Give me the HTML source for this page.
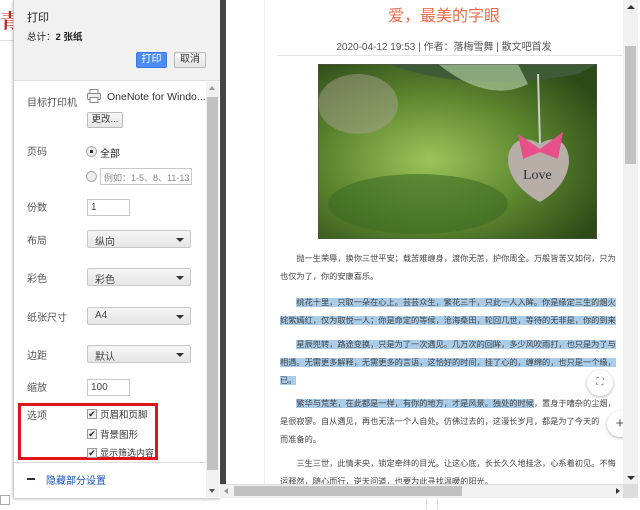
<!DOCTYPE html>
<html><head><meta charset="utf-8"><style>
*{box-sizing:border-box;margin:0;padding:0}
body{width:640px;height:510px;overflow:hidden;background:#fff;position:relative;font-family:"Liberation Sans","Noto Sans CJK SC",sans-serif;font-size:11px;color:#333}
.a{position:absolute}
.lbl{position:absolute;left:27px;font-size:10px;color:#555}
.sel{position:absolute;left:87px;width:104px;height:18px;border:1px solid #c8c8c8;border-radius:2px;background:linear-gradient(#f6f6f6,#e6e6e6);font-size:10px;color:#444;padding:2px 0 0 7px}
.sel:after{content:"";position:absolute;right:6px;top:7px;border:4px solid transparent;border-top:4px solid #333;border-bottom:0}
.inp{position:absolute;left:87px;height:17px;border:1px solid #c8c8c8;background:#fff;font-size:10px;padding:2px 0 0 3px;color:#444;white-space:nowrap;overflow:hidden}
.cb{position:absolute;left:87px;width:10px;height:10px;border:1px solid #999;background:#eee;font-size:9px;line-height:8px;text-align:center;color:#222}
.ct{position:absolute;left:100px;font-size:9.5px;color:#333}
p.t{position:absolute;left:280px;width:343px;font-size:8.2px;line-height:18px;color:#444;white-space:nowrap;overflow:hidden}
.h{background:#a9cce9}
</style></head><body>
<div class="a" style="left:0;top:5px;color:#c3261c;font-size:20px;font-weight:bold;font-family:'Noto Serif CJK SC',serif">青</div>
<div class="a" style="left:0;top:40px;width:13px;height:1px;background:#ddd"></div>
<div class="a" style="left:0;top:495px;width:10px;height:10px;border:1px solid #aaa"></div>
<div class="a" style="left:13px;top:0;width:207px;height:498px;background:#fff;border-left:1px solid #ccc;box-shadow:0 1px 3px rgba(0,0,0,.3)"></div>
<div class="a" style="left:14px;top:0;width:206px;height:81px;background:#f1f1f1;border-bottom:1px solid #ddd"></div>
<div class="a" style="left:27px;top:9px;font-size:11px;color:#222">打印</div>
<div class="a" style="left:27px;top:29px;font-size:9.5px;color:#222">总计：<b>2 张纸</b></div>
<div class="a" style="left:136px;top:52px;width:31px;height:16px;background:#4b8cf5;border:1px solid #3a78e0;border-radius:2px;color:#fff;font-size:10px;text-align:center;line-height:14px">打印</div>
<div class="a" style="left:174px;top:52px;width:32px;height:16px;background:linear-gradient(#f7f7f7,#e5e5e5);border:1px solid #bbb;border-radius:2px;color:#333;font-size:10px;text-align:center;line-height:14px">取消</div>
<div class="a" style="left:206px;top:82px;width:13px;height:415px;background:#f1f1f1"></div>
<div class="a" style="left:207px;top:97px;width:11px;height:373px;background:#c1c1c1"></div>
<div class="a" style="left:209px;top:86px;border:3px solid transparent;border-bottom:4px solid #999;border-top:0"></div>
<div class="a" style="left:209px;top:489px;border:3px solid transparent;border-top:4px solid #555;border-bottom:0"></div>

<div class="lbl" style="top:94px">目标打印机</div>
<svg class="a" style="left:86px;top:88px" width="16" height="16" viewBox="0 0 16 16"><rect x="4" y="1.5" width="8" height="4" fill="#fff" stroke="#888"/><rect x="1.5" y="5.5" width="13" height="6" rx="1" fill="#eee" stroke="#888"/><rect x="4" y="9.5" width="8" height="5" fill="#fff" stroke="#888"/></svg>
<div class="a" style="left:107px;top:91px;font-size:10.5px;color:#333">OneNote for Windo...</div>
<div class="a" style="left:87px;top:112px;width:36px;height:16px;border:1px solid #bbb;border-radius:2px;background:linear-gradient(#f7f7f7,#e5e5e5);font-size:9.5px;text-align:center;line-height:14px">更改...</div>

<div class="lbl" style="top:143px">页码</div>
<div class="a" style="left:86px;top:146px;width:11px;height:11px;border:1px solid #aaa;border-radius:50%;background:#eee"><div style="margin:3px;width:3px;height:3px;background:#333"></div></div>
<div class="a" style="left:100px;top:145px;font-size:10px;color:#222">全部</div>
<div class="a" style="left:86px;top:171px;width:11px;height:11px;border:1px solid #aaa;border-radius:50%;background:#eee"></div>
<div class="inp" style="left:100px;top:168px;width:92px;color:#888;font-size:9px">例如：1-5、8、11-13</div>

<div class="lbl" style="top:199px">份数</div>
<div class="inp" style="top:199px;width:43px">1</div>
<div class="lbl" style="top:232px">布局</div>
<div class="sel" style="top:230px">纵向</div>
<div class="lbl" style="top:270px">彩色</div>
<div class="sel" style="top:268px">彩色</div>
<div class="lbl" style="top:309px">纸张尺寸</div>
<div class="sel" style="top:307px">A4</div>
<div class="lbl" style="top:347px">边距</div>
<div class="sel" style="top:345px">默认</div>
<div class="lbl" style="top:379px">缩放</div>
<div class="inp" style="top:379px;width:43px">100</div>

<div class="a" style="left:18px;top:403px;width:140px;height:57px;border:3px solid #e0141e"></div>
<div class="lbl" style="top:407px">选项</div>
<div class="cb" style="top:409px">✔</div><div class="ct" style="top:407px">页眉和页脚</div>
<div class="cb" style="top:429px">✔</div><div class="ct" style="top:427px">背景图形</div>
<div class="cb" style="top:448px">✔</div><div class="ct" style="top:446px;font-size:9px">显示筛选内容</div>
<div class="a" style="left:14px;top:462px;width:192px;height:1px;background:#ddd"></div>
<div class="a" style="left:27px;top:478px;width:8px;height:2px;background:#333"></div>
<div class="a" style="left:46px;top:472px;font-size:10px;color:#1a55c0">隐藏部分设置</div>

<div class="a" style="left:220px;top:0;width:6px;height:498px;background:#444"></div>
<div class="a" style="left:226px;top:0;width:397px;height:484px;background:#fff"></div>
<div class="a" style="left:264px;top:0;width:1px;height:484px;background:#eee"></div>
<div class="a" style="left:265px;top:2px;width:358px;text-align:center;font-size:16px;color:#f06b4b">爱，最美的字眼</div>
<div class="a" style="left:265px;top:38px;width:358px;text-align:center;font-size:10px;color:#555">2020-04-12 19:53 | 作者：落梅雪舞 | 散文吧首发</div>
<div class="a" style="left:277px;top:55px;width:346px;height:1px;background:#e4e4e4"></div>
<svg class="a" style="left:318px;top:64px" width="279" height="175" viewBox="0 0 279 175">
<defs><radialGradient id="g" cx="40%" cy="55%" r="70%"><stop offset="0" stop-color="#9cc45a"/><stop offset=".5" stop-color="#5f8a30"/><stop offset="1" stop-color="#2c4a18"/></radialGradient></defs>
<rect width="279" height="175" fill="url(#g)"/>
<ellipse cx="40" cy="40" rx="40" ry="30" fill="#a7a08f" opacity=".5"/>
<ellipse cx="100" cy="140" rx="90" ry="30" fill="#3d6a24" opacity=".6"/>
<path d="M70 0 Q150 30 260 10 L279 0Z" fill="#3e5b38"/>
<path d="M120 0 Q170 40 210 20 L200 0Z" fill="#a8c89a" opacity=".7"/>
<line x1="220" y1="10" x2="222" y2="80" stroke="#ccc" stroke-width="2"/>
<path d="M222 80 C190 60 170 110 222 138 C270 110 250 60 222 80Z" fill="#b8aea8"/>
<path d="M200 70 L222 85 L245 68 L240 95 L222 88 L205 95Z" fill="#e8508a"/>
<text x="205" y="115" font-size="14" font-family="Liberation Serif" fill="#333">Love</text>
<rect x=".5" y=".5" width="278" height="174" fill="none" stroke="#555" stroke-dasharray="1 1"/>
</svg>
<p class="t" style="top:250px">　　抛一生荣辱，换你三世平安；载苦难缠身，渡你无恙，护你周全。万般皆苦又如何，只为<br>也仅为了，你的安康喜乐。</p>
<p class="t" style="top:294px">　　<span class="h">桃花十里，只取一朵在心上。芸芸众生，繁花三千，只此一人入眸。你是缘定三生的烟火</span><br><span class="h">姹紫嫣红，仅为取悦一人；你是命定的等候，沧海桑田，轮回几世，等待的无非是，你的到来</span></p>
<p class="t" style="top:336px">　　<span class="h">星辰兜转，路途变换，只是为了一次遇见。几万次的回眸，多少风吹雨打，也只是为了与</span><br><span class="h">相遇。无需更多解释，无需更多的言语，这恰好的时间，挂了心的，缠绵的，也只是一个缘，</span><br><span class="h">已。</span></p>
<p class="t" style="top:395px">　　<span class="h">繁华与荒芜，在此都是一样，有你的地方，才是风景。独处的时候</span>，置身于嘈杂的尘烟，<br>是很寂寥。自从遇见，再也无法一个人自处。仿佛过去的，这漫长岁月，都是为了今天的<br>而准备的。</p>
<p class="t" style="top:455px">　　三生三世，此情未央，锁定牵绊的目光。让这心底，长长久久地挂念，心系着初见。不悔<br>运释然，随心而行，逆天问道，也要为此寻找温暖的阳光。</p>
<div class="a" style="left:587px;top:370px;width:26px;height:26px;border-radius:50%;background:#fff;box-shadow:0 1px 3px rgba(0,0,0,.3);text-align:center;line-height:25px;font-size:10px;color:#666">⛶</div>
<div class="a" style="left:607px;top:411px;width:26px;height:26px;border-radius:50%;background:#fff;box-shadow:0 1px 3px rgba(0,0,0,.3);text-align:center;line-height:25px;font-size:15px;color:#555">+</div>
<div class="a" style="left:623px;top:0;width:15px;height:484px;background:#f1f1f1"></div>
<div class="a" style="left:625px;top:46px;width:11px;height:118px;background:#c1c1c1"></div>
<div class="a" style="left:627px;top:5px;border:4px solid transparent;border-bottom:4px solid #333;border-top:0"></div>
<div class="a" style="left:627px;top:476px;border:4px solid transparent;border-top:4px solid #333;border-bottom:0"></div>
<div class="a" style="left:220px;top:484px;width:418px;height:14px;background:#f1f1f1;border-top:1px solid #ddd"></div>
<div class="a" style="left:234px;top:486px;width:228px;height:10px;background:#c1c1c1"></div>
<div class="a" style="left:224px;top:488px;border:3px solid transparent;border-right:4px solid #999;border-left:0"></div>
<div class="a" style="left:616px;top:488px;border:3px solid transparent;border-left:4px solid #333;border-right:0"></div>
<div class="a" style="left:623px;top:484px;width:15px;height:14px;background:#ddd"></div>
<div class="a" style="left:426px;top:498px;width:1px;height:12px;background:#ddd"></div>
<div class="a" style="left:437px;top:498px;width:1px;height:12px;background:#ddd"></div>
</body></html>
